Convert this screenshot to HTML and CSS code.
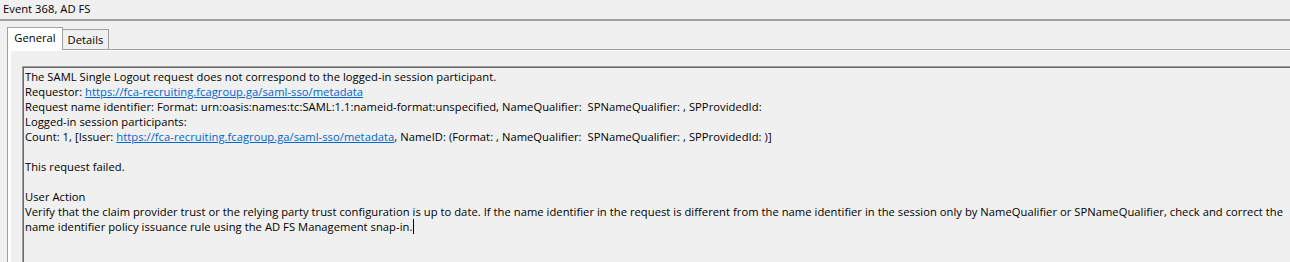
FILE: index.html
```html
<!DOCTYPE html>
<html>
<head>
<meta charset="utf-8">
<link rel="stylesheet" href="styles.css">
</head>
<body>
<div class="title">Event 368, AD FS</div>
<div class="sep"></div>
<div class="tabs">
  <div class="tab tab-general active">General</div>
  <div class="tab tab-details">Details</div>
</div>
<div class="panel">
  <div class="page">
    <div class="box">
      <div class="line">The SAML Single Logout request does not correspond to the logged-in session participant.</div>
      <div class="line">Requestor: <a class="link">https://fca-recruiting.fcagroup.ga/saml-sso/metadata</a></div>
      <div class="line">Request name identifier: Format: urn:oasis:names:tc:SAML:1.1:nameid-format:unspecified, NameQualifier:  SPNameQualifier: , SPProvidedId: </div>
      <div class="line">Logged-in session participants: </div>
      <div class="line">Count: 1, [Issuer: <a class="link">https://fca-recruiting.fcagroup.ga/saml-sso/metadata</a>, NameID: (Format: , NameQualifier:  SPNameQualifier: , SPProvidedId: )]</div>
      <div class="line"> </div>
      <div class="line">This request failed.</div>
      <div class="line"> </div>
      <div class="line">User Action</div>
      <div class="line">Verify that the claim provider trust or the relying party trust configuration is up to date. If the name identifier in the request is different from the name identifier in the session only by NameQualifier or SPNameQualifier, check and correct the </div>
      <div class="line">name identifier policy issuance rule using the AD FS Management snap-in.<span class="caret"></span></div>
    </div>
  </div>
</div>
</body>
</html>
```
FILE: styles.css
```css
html, body {
  margin: 0;
  padding: 0;
  overflow: hidden;
  background: #f0f0f0;
}
body {
  font-family: "Open Sans", "Liberation Sans", Arial, sans-serif;
  font-size: 11.2px;
  letter-spacing: 0.04px;
  color: #000;
  width: 1290px;
  height: 262px;
}
.title {
  padding: 1px 3px 0 3px;
  line-height: 15px;
  height: 16px;
}
.sep {
  margin-top: 2px;
  height: 2px;
  background: #a0a0a0;
}
.tabs {
  display: flex;
  align-items: flex-end;
  margin: 6px 0 0 7px;
  height: 22px;
  position: relative;
  z-index: 2;
}
.tab {
  box-sizing: border-box;
  border: 1px solid #a0a0a0;
  border-bottom: none;
  text-align: center;
  line-height: 18px;
}
.tab-general {
  width: 56px;
  height: 23px;
  margin-bottom: -1px;
  background: #ffffff;
  line-height: 20px;
  position: relative;
  z-index: 2;
}
.tab-details {
  width: 47px;
  height: 20px;
  margin-left: -1px;
  background: #f0f0f0;
  padding-top: 1px;
}
.panel {
  margin-left: 7px;
  width: 1400px;
  height: 220px;
  border-top: 1px solid #a0a0a0;
  border-left: 1px solid #a0a0a0;
  background: #ffffff;
  position: relative;
  z-index: 1;
}
.page {
  margin: 1px 0 0 3px;
  height: 210px;
  background: #f0f0f0;
  padding: 15px 0 0 11px;
}
.box {
  border-top: 1px solid #a0a0a0;
  border-left: 1px solid #a0a0a0;
  box-shadow: inset 1px 1px 0 #696969;
  padding: 2px 0 0 2px;
  height: 200px;
  width: 1380px;
}
.line {
  white-space: pre;
  line-height: 15px;
  height: 15px;
}
.link {
  color: #0066cc;
  text-decoration: underline;
}
.caret {
  display: inline-block;
  width: 1px;
  height: 15px;
  background: #000;
  vertical-align: top;
  margin-left: 1px;
}
```
